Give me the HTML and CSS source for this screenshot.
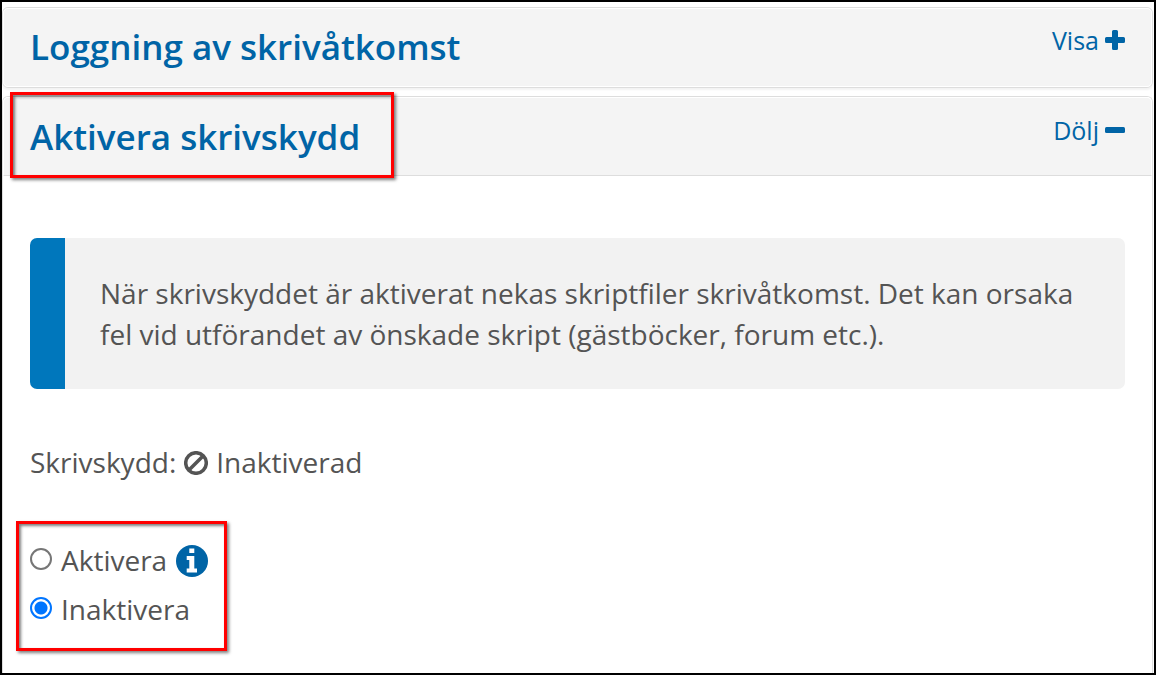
FILE: index.html
```html
<!DOCTYPE html>
<html lang="sv">
<head>
<meta charset="utf-8">
<meta name="viewport" content="width=device-width, initial-scale=1">
<title>Aktivera skrivskydd</title>
<link rel="stylesheet" href="styles.css">
</head>
<body>
<main class="frame">
  <section class="panel">
    <header class="panel-head">
      <h2 class="panel-title">Loggning av skrivåtkomst</h2>
      <button class="toggle" type="button" aria-expanded="false">Visa
        <svg class="toggle-icon" viewBox="0 0 20 20" aria-hidden="true"><path d="M8.500 0h3q1.500 0 1.500 1.500V7h5.500Q20 7 20 8.500v3q0 1.500-1.500 1.500H13v5.500q0 1.500-1.500 1.500h-3Q7 20 7 18.500V13H1.500Q0 13 0 11.500v-3Q0 7 1.500 7H7V1.500Q7 0 8.500 0z"/></svg>
      </button>
    </header>
  </section>
  <section class="panel panel-open">
    <header class="panel-head">
      <h2 class="panel-title">Aktivera skrivskydd</h2>
      <button class="toggle" type="button" aria-expanded="true">Dölj
        <svg class="toggle-icon" viewBox="0 0 20 20" aria-hidden="true"><rect y="7" width="20" height="6" rx="1.500"/></svg>
      </button>
      <span class="highlight highlight-title"></span>
    </header>
    <div class="panel-body">
      <p class="notice">När skrivskyddet är aktiverat nekas skriptfiler skrivåtkomst. Det kan orsaka fel vid utförandet av önskade skript (gästböcker, forum etc.).</p>
      <p class="status">Skrivskydd:
        <svg class="status-icon" viewBox="0 0 24 24" aria-hidden="true"><circle cx="12" cy="12" r="10.300"/><path d="M5 19L19 5"/></svg>
        Inaktiverad</p>
      <form class="options">
        <div class="option">
          <input class="radio" type="radio" name="protect" id="on">
          <label for="on">Aktivera</label>
          <button class="info" type="button" aria-label="Information">
            <svg class="info-icon" viewBox="0 0 32 32" aria-hidden="true"><circle class="info-disc" cx="16" cy="16" r="16"/><path class="info-mark" d="M13.300 3.500h5v4.500h-5zM10.700 11H18.300v12.500h2.700v4H10.700v-4h2.600V15h-2.600z"/></svg>
          </button>
        </div>
        <div class="option">
          <input class="radio" type="radio" name="protect" id="off" checked>
          <label for="off">Inaktivera</label>
        </div>
        <span class="highlight highlight-options"></span>
      </form>
    </div>
  </section>
</main>
</body>
</html>
```

FILE: styles.css
```css
* { box-sizing: border-box; }

body {
  margin: 0;
  background: #fff;
  color: #545454;
  font: 28px/41px "Open Sans", "Noto Sans", sans-serif;
}

.frame {
  display: flex;
  flex-direction: column;
  gap: 8px;
  min-height: 100vh;
  padding: 5px 1px 0 0;
  border: 2px solid #000;
}

.panel {
  border: 1px solid #ddd;
  border-radius: 6px;
  box-shadow: 0 2px 2px rgba(0, 0, 0, 0.05);
}

.panel-open {
  flex: 1;
  border-bottom: 0;
  border-radius: 6px 6px 0 0;
}

.panel-head {
  position: relative;
  display: flex;
  justify-content: space-between;
  align-items: flex-start;
  padding: 15px 26px 16px;
  border: 1px solid #fff;
  border-radius: 5px;
  background: #f4f4f4;
}

.panel-open .panel-head {
  padding-top: 16px;
  padding-bottom: 15px;
  border-bottom-color: #ddd;
  border-radius: 5px 5px 0 0;
}

.panel-title {
  margin: 0;
  color: #0064a6;
  font-size: 35px;
  font-weight: 600;
  line-height: 46px;
}

.toggle {
  display: flex;
  align-items: center;
  gap: 6px;
  padding: 0;
  border: 0;
  background: none;
  color: #0064a6;
  font: inherit;
  font-size: 25px;
  line-height: 32px;
  cursor: pointer;
}

.toggle-icon {
  width: 20px;
  height: 20px;
  fill: currentColor;
}

.panel-body {
  padding: 62px 27px 20px;
}

.notice {
  margin: 0 0 53px;
  padding: 35px 35px 34px;
  border-left: 35px solid #0077bc;
  border-radius: 7px;
  background: #f2f2f2;
}

.status {
  display: flex;
  align-items: center;
  gap: 8px;
  margin: 0 0 57px;
}

.status-icon {
  width: 24px;
  height: 24px;
  fill: none;
  stroke: currentColor;
  stroke-width: 3.5;
}

.options {
  position: relative;
  display: flex;
  flex-direction: column;
  gap: 8px;
}

.option {
  display: flex;
  align-items: center;
  gap: 9px;
}

.radio {
  appearance: none;
  width: 22px;
  height: 22px;
  margin: 0 0 3px;
  border: 2px solid #767676;
  border-radius: 50%;
  background: #fff;
}

.radio:checked {
  border-color: #0075ff;
  background: radial-gradient(circle, #0075ff 6px, #fff 7px);
}

.info {
  display: flex;
  padding: 0;
  border: 0;
  background: none;
  cursor: pointer;
}

.info-icon {
  width: 32px;
  height: 32px;
}

.info-disc { fill: #0064a6; }
.info-mark { fill: #fff; }

.highlight {
  position: absolute;
  border: 3px solid #f00;
  box-shadow: 2px 2px 3px rgba(0, 0, 0, 0.5), inset 2px 2px 3px rgba(0, 0, 0, 0.5);
  pointer-events: none;
}

.highlight-title {
  top: -6px;
  left: 6px;
  width: 384px;
  height: 86px;
}

.highlight-options {
  top: -19px;
  left: -14px;
  width: 211px;
  height: 130px;
}
```
